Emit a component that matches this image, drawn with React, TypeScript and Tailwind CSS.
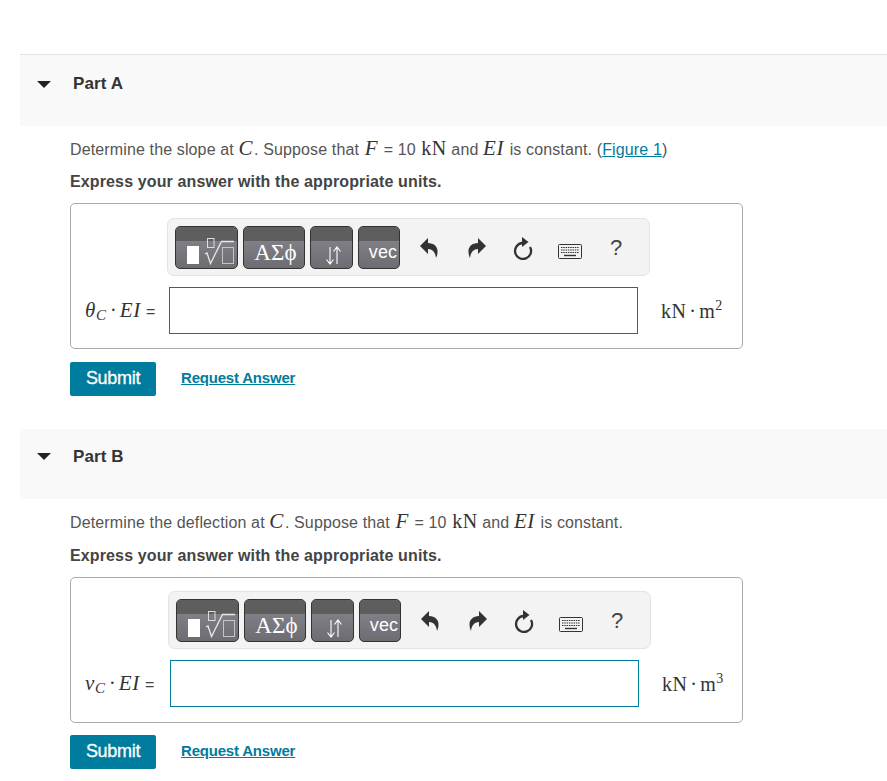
// Mastering-style problem parts with answer palette
import React from 'react';

const serif = "font-['Liberation_Serif',serif]";

function M({ children, className = '' }: { children: React.ReactNode; className?: string }) {
  return <span className={`${serif} italic text-[21px] tracking-[0.6px] text-[#333] ${className}`}>{children}</span>;
}

function KN() {
  return <span className={`${serif} ml-[1px] text-[20px] tracking-[0.5px] text-[#333]`}>kN</span>;
}

function PaletteButton({ width, children }: { width: string; children: React.ReactNode }) {
  return (
    <div className={`${width} relative h-[43px] rounded-[5px] border border-[#333] overflow-hidden bg-gradient-to-b from-[#8b8990] to-[#6c6c72]`}>
      <div className="h-[14px] bg-[#5e5e5e]" />
      <div className="absolute inset-0 top-[13px] flex items-center justify-center text-white">{children}</div>
    </div>
  );
}

function Toolbar() {
  return (
    <div className="flex items-center w-[483px] h-[58px] pl-[7px] rounded-[7px] border border-[#e3e3e3] bg-[#f3f3f3]">
      <div className="flex gap-[5px]">
        <PaletteButton width="w-[63px]">
          <svg width="61" height="41" viewBox="0 0 61 41" fill="none" stroke="#e8e8e8" strokeWidth="1" className="absolute left-0 top-[-13px]">
            <rect x="11" y="19" width="12" height="18" fill="#fff" stroke="none" />
            <rect x="31.5" y="11.5" width="6.5" height="9" stroke="#ddd" />
            <path d="M29 27l2-1 3.5 10.5L45.5 14.5H58" strokeWidth="1.3" />
            <rect x="46.5" y="20.5" width="11" height="16" stroke="#c4c4c4" />
          </svg>
        </PaletteButton>
        <PaletteButton width="w-[62px]">
          <span className={`${serif} text-[23px] leading-none mt-[-3px] ml-[3px]`}>ΑΣϕ</span>
        </PaletteButton>
        <PaletteButton width="w-[43px]">
          <svg width="22" height="21" viewBox="0 0 22 21" fill="none" stroke="#fff" strokeWidth="1.1" className="mt-[3px] ml-[4px]">
            <path d="M7 2v16M3.5 14.5l3.5 4.5 3.5-4.5M14 19V3M10.5 6.5l3.5-4.5 3.5 4.5" />
          </svg>
        </PaletteButton>
        <PaletteButton width="w-[42px]">
          <span className="text-[18px] leading-none ml-[8px] mt-[-3px]">vec</span>
        </PaletteButton>
      </div>
      <div className="flex items-start h-[24px] ml-[20px] text-[#333]">
        <svg width="18" height="20" viewBox="0 0 18 20" fill="#333" className="mt-[3px]">
          <path d="M0 8L8 0V5C14 5 18 9 17.5 14C17.5 16 17 18 16 20C15.5 15 13 11 8 11V16Z" />
        </svg>
        <svg width="18" height="20" viewBox="0 0 18 20" fill="#333" className="mt-[3px] ml-[30px]">
          <path d="M18 8L10 0V5C4 5 0 9 .5 14C.5 16 1 18 2 20C2.5 15 5 11 10 11V16Z" />
        </svg>
        <svg width="21" height="23" viewBox="0 0 21 23" fill="none" stroke="#333" strokeWidth="2.3" className="mt-[2px] ml-[26px]">
          <path d="M10.5 6A8 8 0 1 0 18 10" />
          <path d="M10 0l6.5 5-6.5 5z" fill="#333" stroke="none" />
        </svg>
        <svg width="24" height="15" viewBox="0 0 24 15" fill="none" className="mt-[9px] ml-[25px]">
          <rect x="0.5" y="0.5" width="23" height="14" rx="1" stroke="#333" />
          <path d="M3 3.5h18M3 6h18M3 8.5h18" stroke="#333" strokeWidth="1.2" strokeDasharray="1.5 0.8" />
          <path d="M6 11.5h12" stroke="#333" strokeWidth="1.4" />
        </svg>
        <span className="mt-[2px] ml-[28px] text-[22px] leading-none text-[#444]">?</span>
      </div>
    </div>
  );
}

function AnswerBox({ label, exp, accent, toolbarTop, toolbarIndent, labelWidth }: { label: React.ReactNode; exp: string; accent: string; toolbarTop: string; toolbarIndent: string; labelWidth: string }) {
  return (
    <div className="w-[673px] h-[146px] rounded-[5px] border border-[#aaa] mt-[9px]">
      <div className={`${toolbarIndent} ${toolbarTop}`}>
        <Toolbar />
      </div>
      <div className="flex items-center mt-[11px]">
        <div className={`${labelWidth} pl-[14px] whitespace-nowrap text-[#333] flex items-baseline`}>{label}</div>
        <div className={`w-[469px] h-[47px] border ${accent}`} />
        <div className={`ml-[23px] ${serif} text-[20px] text-[#333] whitespace-nowrap tracking-[0.4px]`}>
          kN<span className="mx-[3px]">·</span>m<span className="inline-block text-[14px] leading-none -translate-y-[8px]">{exp}</span>
        </div>
      </div>
    </div>
  );
}

function Actions({ top }: { top: string }) {
  return (
    <div className={`flex items-center ${top}`}>
      <button className="w-[86px] h-[34px] pb-[2px] rounded-[2px] bg-[#007c9e] text-white text-[18px] tracking-[-0.3px] [-webkit-text-stroke:0.3px_white]">Submit</button>
      <a className="ml-[25px] pb-[2px] text-[15px] font-bold text-[#007c9e] underline tracking-[-0.2px]">Request Answer</a>
    </div>
  );
}

function PartHeader({ title, height, titleTop, arrowTop }: { title: string; height: string; titleTop: string; arrowTop: string }) {
  return (
    <div className={`ml-[20px] ${height} bg-[#f9f9f9] flex`}>
      <div className={`ml-[17px] ${arrowTop} w-0 h-0 border-x-[7px] border-x-transparent border-t-[7px] border-t-[#222]`} />
      <div className={`ml-[22px] ${titleTop} text-[17px] leading-[26px] font-bold text-[#333] tracking-[0.1px]`}>{title}</div>
    </div>
  );
}

function MathLabel({ symbol }: { symbol: string }) {
  return (
    <>
      <M>{symbol}</M>
      <span className={`${serif} italic text-[15px] translate-y-[3px]`}>C</span>
      <span className={`${serif} text-[20px] mx-[4px]`}>·</span>
      <M className="-ml-[1px]">EI</M>
      <span className="ml-[5px] text-[#444]">=</span>
    </>
  );
}

export default function App() {
  return (
    <div className="w-[887px] h-[781px] overflow-hidden bg-white font-['Liberation_Sans',sans-serif] text-[16px] tracking-[0.13px] text-[#555]">
      <div className="h-[54px]" />
      <div className="ml-[20px] h-px bg-[#e3e3e3]" />
      <PartHeader title="Part A" height="h-[71px]" titleTop="mt-[16px]" arrowTop="mt-[26px]" />

      <div className="ml-[70px]">
        <p className="mt-[10px] h-[24px] leading-[24px] whitespace-nowrap">
          Determine the slope at <M className="mr-[1px]">C</M>. Suppose that <M className="mx-[1px]">F</M> = 10 <KN /> and <M className="mr-[1px]">EI</M> is constant. (<a className="text-[#007c9e] underline">Figure 1</a>)
        </p>
        <p className="mt-[10px] h-[24px] leading-[24px] font-bold text-[#444] whitespace-nowrap">Express your answer with the appropriate units.</p>
        <AnswerBox
          accent="border-[#1a6d8c]"
          exp="2"
          toolbarTop="mt-[14px]"
          toolbarIndent="ml-[96px]"
          labelWidth="w-[98px]"
          label={<MathLabel symbol="θ" />}
        />
        <Actions top="mt-[13px]" />
      </div>

      <div className="h-[33px]" />
      <PartHeader title="Part B" height="h-[70px]" titleTop="mt-[15px]" arrowTop="mt-[24px]" />

      <div className="ml-[70px]">
        <p className="mt-[10px] h-[24px] leading-[24px] whitespace-nowrap">
          Determine the deflection at <M className="mr-[1px]">C</M>. Suppose that <M className="mx-[1px]">F</M> = 10 <KN /> and <M className="mr-[1px]">EI</M> is constant.
        </p>
        <p className="mt-[11px] h-[24px] leading-[24px] font-bold text-[#444] whitespace-nowrap">Express your answer with the appropriate units.</p>
        <AnswerBox
          accent="border-[#007c9e]"
          exp="3"
          toolbarTop="mt-[13px]"
          toolbarIndent="ml-[97px]"
          labelWidth="w-[99px]"
          label={<MathLabel symbol="v" />}
        />
        <Actions top="mt-[12px]" />
      </div>
    </div>
  );
}
